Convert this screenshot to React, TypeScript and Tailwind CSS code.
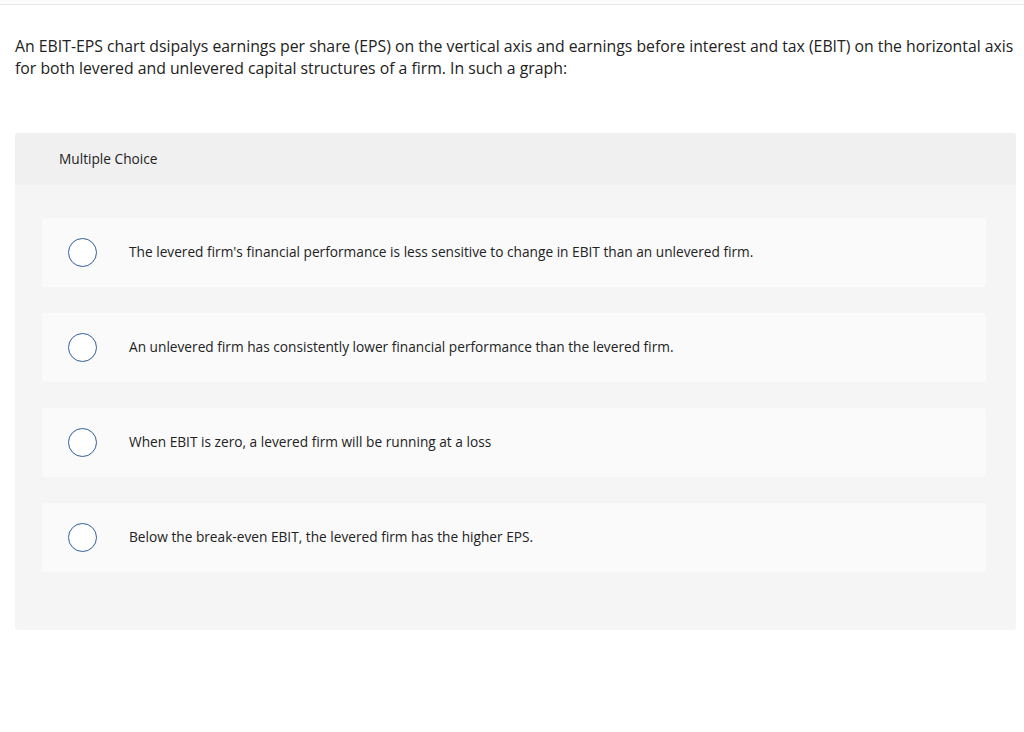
const OPTIONS = [
  "The levered firm's financial performance is less sensitive to change in EBIT than an unlevered firm.",
  'An unlevered firm has consistently lower financial performance than the levered firm.',
  'When EBIT is zero, a levered firm will be running at a loss',
  'Below the break-even EBIT, the levered firm has the higher EPS.',
];

function App() {
  return (
    <div className="min-h-[732px] bg-white text-[#222] font-['Open_Sans',sans-serif]">
      <div className="h-[5px] border-b border-[#e6e6e6] bg-[#fcfcfc]" />

      <div className="pl-[15px] pr-[8px]">
        <p className="pt-[30px] text-[15.8px] leading-[22px]">
          An EBIT-EPS chart dsipalys earnings per share (EPS) on the vertical axis and earnings before interest and tax
          (EBIT) on the horizontal axis for both levered and unlevered capital structures of a firm. In such a graph:
        </p>

        <div className="mt-[54px] w-[1001px] rounded-[3px] bg-[#f5f5f5] overflow-hidden">
          <div className="h-[52px] bg-[#f0f0f0] pl-[44px] flex items-center text-[13.7px] text-[#222]">
            Multiple Choice
          </div>

          <div className="pt-[33px] pb-[58px] pl-[27px] pr-[30px] flex flex-col gap-[26px]">
            {OPTIONS.map((text) => (
              <label
                key={text}
                className="h-[69px] rounded-[3px] bg-[#fafafa] flex items-center pl-[26px] cursor-pointer"
              >
                <span className="w-[29px] h-[29px] rounded-full border-[1.5px] border-[#2e5f9a] bg-white shrink-0" />
                <span className="ml-[32px] text-[13.7px] text-[#222]">{text}</span>
              </label>
            ))}
          </div>
        </div>
      </div>
    </div>
  );
}

export default App;
